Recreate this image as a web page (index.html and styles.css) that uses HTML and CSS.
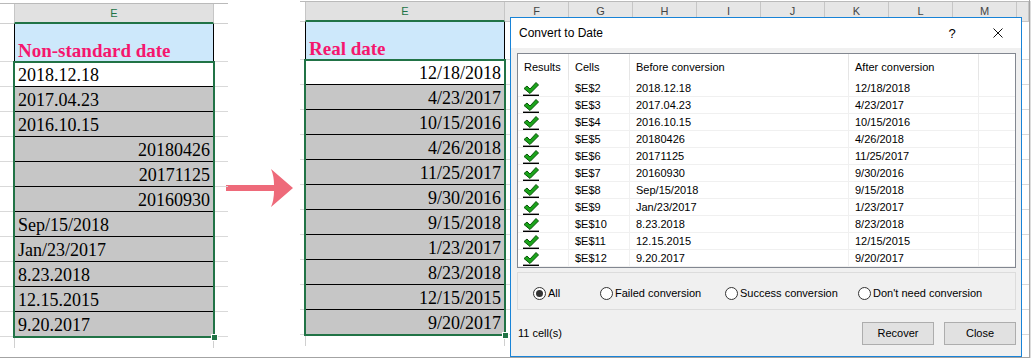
FILE: index.html
```html
<!DOCTYPE html>
<html lang="en">
<head>
    <meta charset="UTF-8">
    <title>Convert to Date</title>
    <link rel="stylesheet" href="styles.css">
</head>
<body>

<svg class="defs" width="0" height="0">
    <symbol id="ok" viewBox="0 0 16 15">
        <polygon points="1,7.5 4,5 7,8 13,1.5 15.5,4 7,12.5" fill="#1aa41a" stroke="#0a560a" stroke-width="1" stroke-linejoin="round"/>
        <rect x="0" y="13.6" width="16" height="1.4" fill="#000"/>
    </symbol>
</svg>

<div class="frame">

    <!-- before -->
    <div class="sheet sheet-left">
        <div class="row head-row"><div class="side"></div><div class="col-head on">E</div><div class="side"></div></div>
        <div class="row title-row"><div class="side"></div><div class="title">Non-standard date</div><div class="side"></div></div>
        <div class="row"><div class="side"></div><div class="cell first">2018.12.18</div><div class="side"></div></div>
        <div class="row"><div class="side"></div><div class="cell">2017.04.23</div><div class="side"></div></div>
        <div class="row"><div class="side"></div><div class="cell">2016.10.15</div><div class="side"></div></div>
        <div class="row"><div class="side"></div><div class="cell r">20180426</div><div class="side"></div></div>
        <div class="row"><div class="side"></div><div class="cell r">20171125</div><div class="side"></div></div>
        <div class="row"><div class="side"></div><div class="cell r">20160930</div><div class="side"></div></div>
        <div class="row"><div class="side"></div><div class="cell">Sep/15/2018</div><div class="side"></div></div>
        <div class="row"><div class="side"></div><div class="cell">Jan/23/2017</div><div class="side"></div></div>
        <div class="row"><div class="side"></div><div class="cell">8.23.2018</div><div class="side"></div></div>
        <div class="row"><div class="side"></div><div class="cell">12.15.2015</div><div class="side"></div></div>
        <div class="row"><div class="side"></div><div class="cell">9.20.2017</div><div class="side"></div></div>
        <div class="row tail"><div class="gap"></div><div class="blank"></div><div class="gap"></div></div>
        <div class="sel-frame"><span class="handle"></span></div>
    </div>

    <div class="arrow-gap">
        <svg class="arrow" width="68" height="38" viewBox="0 0 68 38">
            <path d="M0 16 H48 Q48 7 45 0 L67 19 L45 38 Q48 31 48 22 H0 Z" fill="#ee6a7a"/>
        </svg>
    </div>

    <!-- after -->
    <div class="sheet sheet-right">
        <div class="row head-row">
            <div class="side"></div>
            <div class="col-head on">E</div>
            <div class="rest-head">
                <span>F</span><span>G</span><span>H</span><span>I</span><span>J</span><span>K</span><span>L</span><span>M</span><span></span>
            </div>
        </div>
        <div class="row title-row"><div class="side"></div><div class="title">Real date</div><div class="side"></div></div>
        <div class="row"><div class="side"></div><div class="cell r first">12/18/2018</div><div class="side"></div></div>
        <div class="row"><div class="side"></div><div class="cell r">4/23/2017</div><div class="side"></div></div>
        <div class="row"><div class="side"></div><div class="cell r">10/15/2016</div><div class="side"></div></div>
        <div class="row"><div class="side"></div><div class="cell r">4/26/2018</div><div class="side"></div></div>
        <div class="row"><div class="side"></div><div class="cell r">11/25/2017</div><div class="side"></div></div>
        <div class="row"><div class="side"></div><div class="cell r">9/30/2016</div><div class="side"></div></div>
        <div class="row"><div class="side"></div><div class="cell r">9/15/2018</div><div class="side"></div></div>
        <div class="row"><div class="side"></div><div class="cell r">1/23/2017</div><div class="side"></div></div>
        <div class="row"><div class="side"></div><div class="cell r">8/23/2018</div><div class="side"></div></div>
        <div class="row"><div class="side"></div><div class="cell r">12/15/2015</div><div class="side"></div></div>
        <div class="row"><div class="side"></div><div class="cell r">9/20/2017</div><div class="side"></div></div>
        <div class="row tail"><div class="gap"></div><div class="blank"></div><div class="gap"></div></div>
        <div class="sel-frame"><span class="handle"></span></div>
    </div>

    <div class="dialog">
        <div class="dlg-title">
            <span class="dlg-name">Convert to Date</span>
            <span class="dlg-btn">?</span>
            <span class="dlg-btn">
                <svg width="10" height="10" viewBox="0 0 10 10"><path d="M0.5 0.5 L9.5 9.5 M9.5 0.5 L0.5 9.5" stroke="#111" stroke-width="1"/></svg>
            </span>
        </div>
        <div class="dlg-body">
            <div class="list">
                <div class="list-head"><span>Results</span><span>Cells</span><span>Before conversion</span><span>After conversion</span><span></span></div>
                <div class="list-row"><span><svg class="ok"><use href="#ok"/></svg></span><span>$E$2</span><span>2018.12.18</span><span>12/18/2018</span><span></span></div>
                <div class="list-row"><span><svg class="ok"><use href="#ok"/></svg></span><span>$E$3</span><span>2017.04.23</span><span>4/23/2017</span><span></span></div>
                <div class="list-row"><span><svg class="ok"><use href="#ok"/></svg></span><span>$E$4</span><span>2016.10.15</span><span>10/15/2016</span><span></span></div>
                <div class="list-row"><span><svg class="ok"><use href="#ok"/></svg></span><span>$E$5</span><span>20180426</span><span>4/26/2018</span><span></span></div>
                <div class="list-row"><span><svg class="ok"><use href="#ok"/></svg></span><span>$E$6</span><span>20171125</span><span>11/25/2017</span><span></span></div>
                <div class="list-row"><span><svg class="ok"><use href="#ok"/></svg></span><span>$E$7</span><span>20160930</span><span>9/30/2016</span><span></span></div>
                <div class="list-row"><span><svg class="ok"><use href="#ok"/></svg></span><span>$E$8</span><span>Sep/15/2018</span><span>9/15/2018</span><span></span></div>
                <div class="list-row"><span><svg class="ok"><use href="#ok"/></svg></span><span>$E$9</span><span>Jan/23/2017</span><span>1/23/2017</span><span></span></div>
                <div class="list-row"><span><svg class="ok"><use href="#ok"/></svg></span><span>$E$10</span><span>8.23.2018</span><span>8/23/2018</span><span></span></div>
                <div class="list-row"><span><svg class="ok"><use href="#ok"/></svg></span><span>$E$11</span><span>12.15.2015</span><span>12/15/2015</span><span></span></div>
                <div class="list-row"><span><svg class="ok"><use href="#ok"/></svg></span><span>$E$12</span><span>9.20.2017</span><span>9/20/2017</span><span></span></div>
            </div>

            <div class="filter">
                <label class="opt"><span class="radio on"></span>All</label>
                <label class="opt"><span class="radio"></span>Failed conversion</label>
                <label class="opt"><span class="radio"></span>Success conversion</label>
                <label class="opt"><span class="radio"></span>Don't need conversion</label>
            </div>

            <div class="dlg-foot">
                <span class="count">11 cell(s)</span>
                <button class="btn">Recover</button>
                <button class="btn">Close</button>
            </div>
        </div>
    </div>

</div>

</body>
</html>
```

FILE: styles.css
```css
* { box-sizing: border-box; }
body { margin: 0; background: #fff; font-family: "Liberation Sans", Arial, sans-serif; }
.defs { position: absolute; }

.frame { position: relative; display: flex; width: 1030px; height: 358px; border-right: 1px solid #a3a3a3; border-bottom: 1px solid #a3a3a3; box-shadow: 1px 1px 0 #dcdcdc; overflow: hidden; }

/* sheets */
.sheet { position: relative; }
.sheet-left { width: 228px; padding-top: 3px; }
.sheet-right { flex: 1; padding-top: 1px; }

.row { display: grid; grid-template-columns: 14px 200px 14px; grid-template-rows: 100%; height: 25px; }
.sheet-right .row { grid-template-columns: 5px 200px 1fr; }

.side { border-bottom: 1px solid #d9d9d9; }
.head-row { height: 21px; border-top: 1px solid #bababa; }
.head-row .side { border-bottom: 1px solid #d0d0d0; }
.col-head { display: flex; align-items: center; justify-content: center; background: #e1e1e1; border-left: 1px solid #c6c6c6; border-right: 1px solid #c6c6c6; font-size: 11px; color: #444; }
.col-head.on { color: #217346; border-bottom: 2px solid #217346; }
.rest-head { display: grid; grid-template-columns: repeat(8, 64px) 1fr; }
.rest-head span { display: flex; justify-content: center; padding-top: 3px; background: #e6e6e6; border-right: 1px solid #c6c6c6; border-bottom: 1px solid #c6c6c6; font-size: 11px; color: #444; }

.title-row { height: 38px; }
.title { background: #cde8fb; border-left: 1px solid #000; border-right: 1px solid #000; padding: 17px 0 0 3px; font: bold 19px/1 "Liberation Serif", "Times New Roman", serif; color: #f5166e; white-space: nowrap; }

.cell { background: #c6c6c6; border: 1px solid #000; border-top: 0; padding: 3px 3px 0; font: 18px/21px "Liberation Serif", "Times New Roman", serif; color: #000; white-space: nowrap; }
.cell.first { background: #fff; }
.cell.r { text-align: right; }

.tail { height: 11px; }
.tail .blank { border-left: 1px solid #d0d0d0; border-right: 1px solid #d0d0d0; }

.sel-frame { position: absolute; left: 13px; top: 61px; width: 202px; height: 277px; border: 2px solid #217346; }
.sheet-right .sel-frame { left: 4px; top: 59px; }
.handle { position: absolute; right: -5px; bottom: -5px; width: 7px; height: 7px; background: #217346; border: 1px solid #fff; }

.arrow-gap { width: 72px; }
.arrow { display: block; margin: 169px 0 0 -2px; }

/* dialog */
.dialog { position: absolute; left: 510px; top: 17px; width: 512px; height: 340px; display: flex; flex-direction: column; background: #f0f0f0; border: 1px solid #1883d7; font-size: 11px; color: #000; }
.dlg-title { display: flex; align-items: center; height: 30px; background: #fff; padding-left: 8px; font-size: 12px; }
.dlg-name { flex: 1; }
.dlg-btn { display: flex; align-items: center; justify-content: center; width: 46px; height: 30px; font-size: 13px; }

.dlg-body { flex: 1; display: flex; flex-direction: column; padding: 5px 5px 0 6px; }
.list { height: 215px; flex-shrink: 0; background: #fff; border: 1px solid #828790; }
.list-head, .list-row { display: grid; grid-template-columns: 51px 61px 219px 130px 1fr; }
.list-head { height: 26px; }
.list-head span { display: flex; align-items: center; padding-left: 6px; border-right: 1px solid #e5e5e5; }
.list-head span:last-child { border-right: 0; }
.list-row { height: 17px; }
.list-row span { padding-left: 6px; line-height: 16px; border-right: 1px solid #f0f0f0; border-bottom: 1px solid #f0f0f0; white-space: nowrap; }
.list-row span:first-child { padding-left: 5px; }
.list-row span:last-child { border-right: 0; }
.ok { display: block; width: 16px; height: 15px; margin-top: 1px; }

.filter { display: grid; grid-template-columns: 67px 125px 133px auto; align-items: center; height: 38px; flex-shrink: 0; margin-top: 4px; padding: 4px 0 0 15px; border: 1px solid #dcdcdc; }
.opt { display: flex; align-items: center; white-space: nowrap; }
.radio { position: relative; width: 13px; height: 13px; margin-right: 2px; background: #fff; border: 1px solid #333; border-radius: 50%; }
.radio.on::after { content: ""; position: absolute; left: 2px; top: 2px; width: 7px; height: 7px; background: #333; border-radius: 50%; }

.dlg-foot { flex: 1; display: flex; align-items: center; gap: 10px; padding-left: 1px; }
.count { flex: 1; }
.btn { width: 72px; height: 23px; padding: 0; background: #e1e1e1; border: 1px solid #adadad; font: 11px "Liberation Sans", Arial, sans-serif; color: #000; }
```
